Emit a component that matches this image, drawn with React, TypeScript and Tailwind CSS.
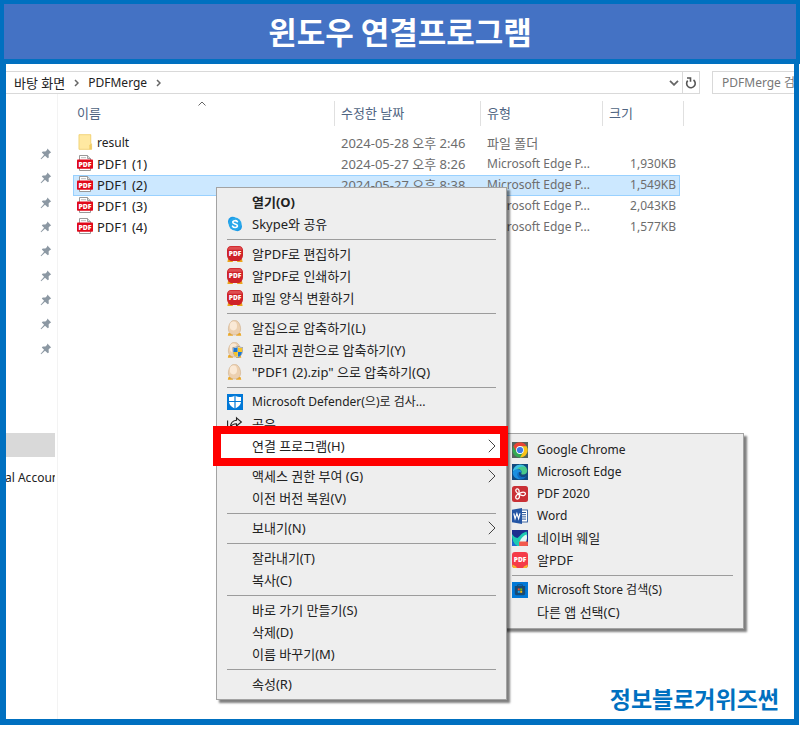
import type { ReactNode } from "react";

const FONT = "font-['Noto_Sans','Noto_Sans_CJK_KR',sans-serif]";
const KR_FONT = "font-['Noto_Sans_CJK_KR',sans-serif]";

function Svg({ children }: { children: ReactNode }) {
  return (
    <svg viewBox="0 0 16 16" className="block size-4" aria-hidden="true">
      {children}
    </svg>
  );
}

function IconLabel({ y, size = 6 }: { y: number; size?: number }) {
  return (
    <text x="8" y={y} fontSize={size} fontWeight="800" textAnchor="middle" fill="#fff" fontFamily="Open Sans, sans-serif">
      PDF
    </text>
  );
}

function PinIcon() {
  return (
    <svg viewBox="0 0 12 12" className="block size-3" aria-hidden="true">
      <path d="M7.4.6 11.2 4.4 10 5 8.6 6.6 8.8 9.4 7.8 10.2 5 7.7 1.2 11.2.6 10.8 4.1 6.8 1.8 4.4 2.8 3.4 5.4 3.5 7 2Z" fill="#8c98a3" />
    </svg>
  );
}

function FolderIcon() {
  return (
    <Svg>
      <path d="M1.8.5H14v11.2h1V15.5H1.8Z" fill="#ffe594" />
      <path d="M2.2.9h11.4v14.2H2.2Z" fill="#ffe9a2" />
      <path d="M14 9.5h.6v5.8h-2.2v-4Z" fill="#f2cc62" />
      <path d="M2 .7h11.8v9M2 .7v14.6h12.6V9.7" fill="none" stroke="#eccb6b" strokeWidth=".7" />
    </Svg>
  );
}

function PdfFileIcon() {
  return (
    <Svg>
      <path d="M2.5.5h8l3 3v12h-11Z" fill="#fff" stroke="#8d8d8d" strokeWidth=".9" />
      <path d="M10.5.5v3h3" fill="#ddd" stroke="#8d8d8d" strokeWidth=".8" />
      <path d="M4 2.7h5" stroke="#aaa" strokeWidth=".8" />
      <rect y="4.5" width="16" height="9.2" rx=".8" fill="#e1091a" />
      <IconLabel y={11.6} size={6.9} />
    </Svg>
  );
}

function SkypeIcon() {
  return (
    <Svg>
      <circle cx="5.6" cy="5.4" r="4.6" fill="#1c9be8" />
      <circle cx="10.4" cy="10.6" r="4.6" fill="#1c9be8" />
      <circle cx="8" cy="8" r="6.4" fill="#28a8ea" />
      <path d="M10.4 5.7C9.5 4.3 5.8 4.2 5.8 6.2c0 2.1 4.6 1.3 4.6 3.6 0 2.3-4 2.2-4.9.3" fill="none" stroke="#fff" strokeWidth="1.6" strokeLinecap="round" />
    </Svg>
  );
}

function AlPdfRedIcon() {
  return (
    <Svg>
      <path d="M1 13h4l1 3H.4ZM11 13h4l.6 3H10Z" fill="#eba51c" />
      <path d="M4 0h8c2.2 0 4 1.8 4 4v5c0 3-2 5.6-4 6H4C2 14.6 0 12 0 9V4c0-2.2 1.8-4 4-4Z" fill="#cf2228" />
      <path d="M4 .8h8c1.5 0 2.8 1 3 3H1c.2-2 1.5-3 3-3Z" fill="#de4e50" />
      <IconLabel y={10} size={6.6} />
    </Svg>
  );
}

function Egg() {
  return (
    <>
      <path d="M1.5 13h4l.5 2.8H.8ZM10 13h3.500l.8 2.800H9Z" fill="#eba828" />
      <path d="M7.500.2C4 .2 1.400 4.600 1.400 8.800c0 3.800 2.400 6.200 6.100 6.200s6.100-2.400 6.100-6.200C13.600 4.600 11 .2 7.500.2Z" fill="#ecd0b0" stroke="#c9a47c" strokeWidth=".5" />
      <ellipse cx="6.400" cy="6" rx="3.600" ry="4.400" fill="#fae9d6" />
    </>
  );
}

function EggIcon() {
  return (
    <Svg>
      <Egg />
    </Svg>
  );
}

function EggShieldIcon() {
  return (
    <Svg>
      <Egg />
      <path d="M10.8 4.200c1.600 1 3 1.300 4.900 1.300 0 5-1 8.300-4.900 10.200C6.900 13.800 5.800 10.500 5.800 5.500c1.900 0 3.400-.3 5-1.300Z" fill="#fff" stroke="#555" strokeWidth=".5" />
      <path d="M10.700 4.900v5H6.400V6.100c1.700 0 3-.4 4.300-1.200ZM10.800 9.900h4.200c-.5 2.600-1.800 4.100-4.200 5.200Z" fill="#1b77d2" />
      <path d="M10.800 4.900v5h4.300l.1-3.800c-1.800 0-3.100-.4-4.400-1.200ZM10.700 9.900v5.200c-2.400-1.100-3.700-2.600-4.200-5.200Z" fill="#f8c426" />
    </Svg>
  );
}

function DefenderIcon() {
  return (
    <Svg>
      <rect width="16" height="16" fill="#0078d7" />
      <path d="M8 1.500c1.600 1 3.700 1.500 6 1.500v4.300c0 3.500-2.600 6-6 7.300-3.400-1.300-6-3.800-6-7.300V3c2.300 0 4.400-.5 6-1.500Z" fill="#fff" />
      <path d="M8 1v14M1.500 7.500h13" stroke="#0078d7" strokeWidth="1.200" />
    </Svg>
  );
}

function ShareIcon() {
  return (
    <Svg>
      <path d="M.6 4.500v10h12v-3M9.500 1.800 14.400 6 9.500 10V7.700C6.500 7.700 4.600 8.700 3.400 11c.2-4 2.300-6.300 6.100-6.700Z" fill="none" stroke="#222" strokeWidth="1.100" />
    </Svg>
  );
}

function ChromeIcon() {
  return (
    <Svg>
      <rect width="16" height="16" fill="#56635e" />
      <circle cx="8" cy="8" r="7.600" fill="#34a853" />
      <path d="M1.400 4.200A7.600 7.600 0 0 1 14.600 4.200H8A3.800 3.800 0 0 0 4.700 9.900Z" fill="#ea4335" />
      <path d="M14.600 4.200A7.600 7.600 0 0 1 8 15.600L11.300 9.900A3.800 3.800 0 0 0 8 4.200Z" fill="#fbc116" />
      <circle cx="8" cy="8" r="3.900" fill="#fff" />
      <circle cx="8" cy="8" r="3.100" fill="#3b78e7" />
    </Svg>
  );
}

function EdgeIcon() {
  return (
    <Svg>
      <rect width="16" height="16" fill="#124a80" />
      <path d="M1 7.500C2 3.200 4.800.8 8.300.8c4 0 7 2.600 7 6 0 2.400-1.800 3.800-4 3.800-1.700 0-2.400-.7-1.900-1.600.8-1.700-.6-3.700-3-3.700Z" fill="#48c98a" />
      <path d="M.8 7.500C1.400 3.400 4.300.8 8 .7c2.500 0 4 .8 5.200 2.300-3-1-6.200-.8-8.200 2.300Z" fill="#3dbfe6" />
      <path d="M.7 8.400c.4-2.200 2.900-3.600 5.600-3.100C8.500 5.700 9.900 7.300 9.400 9 8 7.500 6.700 8 6.600 9.600c-.1 2.400 2.700 4.500 6 3.900-4.500 3.900-12 1-11.900-5.100Z" fill="#1b8fe0" />
      <path d="M6.600 7.800c-.8 2.900 1.700 5.700 4.700 5.500 1.400-.1 2.500-.6 3.300-1.200-1 2-3.200 3.200-5.200 3.100C6 14.800 3.700 10.400 6.600 7.800Z" fill="#0f6cc4" />
    </Svg>
  );
}

function Pdf2020Icon() {
  return (
    <Svg>
      <rect width="16" height="16" rx="2.500" fill="#c93036" />
      <g fill="none" stroke="#fff" strokeWidth="1.300">
        <path d="M6.700 8C4.500 6.700 3.200 4.800 4 3.500c.8-1.200 2.600-.8 3 .8C7.300 5.600 7.200 6.800 6.700 8Z" />
        <path d="M6.700 8c.8 1.600.8 3.900-.4 4.700-1.300.8-2.800-.1-2.600-1.600C3.800 9.600 5 8.500 6.700 8Z" />
        <path d="M6.700 8c1.500-1.200 4-2.100 5.500-1.700 1.700.5 1.600 2.600 0 3.100C10.600 9.800 8.300 9.200 6.700 8Z" />
      </g>
    </Svg>
  );
}

function WordIcon() {
  return (
    <Svg>
      <rect x="8" y="2" width="7.500" height="12" fill="#fff" stroke="#2b579a" strokeWidth=".9" />
      <path d="M10 4.500h4M10 6.700h4M10 8.900h4M10 11.100h4" stroke="#2b579a" strokeWidth="1" />
      <path d="M0 1.800 10 0v16L0 14.200Z" fill="#2455a4" />
      <path d="M1.800 5.300 3.100 10.600 4.900 5.600 6.600 10.600 8 5.300" fill="none" stroke="#fff" strokeWidth="1.200" />
    </Svg>
  );
}

function WhaleIcon() {
  return (
    <Svg>
      <rect width="16" height="16" fill="#1c2f8f" />
      <path d="M0 4c1.500 2.500 3 3.500 5.500 4C8 6.500 9 3 14.500 1.500 16 5 15 9 10 16H5C1.500 14 0 10 0 4Z" fill="#1dcbb2" />
      <path d="M0 9c1 3.500 2.500 5.500 5 7H0Z" fill="#1e6bd8" />
      <path d="M7.500 12c1.500-4 4-6.500 7-7.500 1 2.500.5 5-.5 7.500Z" fill="#e4f8f5" />
      <rect x="7" y="11.500" width="9" height="4.500" rx=".8" fill="#f2594d" />
    </Svg>
  );
}

function AlPdfIcon() {
  return (
    <Svg>
      <rect width="16" height="16" rx="3" fill="#f53b48" />
      <path d="M.5 12.500 4 14.500 5 16H2C1 16 0 15 .5 12.500ZM15.500 12.500 12 14.500 11 16h3c1 0 2-1 1.500-3.500Z" fill="#f7b52d" />
      <IconLabel y={9.7} size={6.6} />
    </Svg>
  );
}

function StoreIcon() {
  return (
    <Svg>
      <rect width="16" height="16" fill="#0078d7" />
      <path d="M5.600 4V2.800h4.800V4" fill="none" stroke="#14527f" strokeWidth="1" />
      <path d="M2.800 4h10.400v7.500c0 1-.7 1.700-1.700 1.700h-7c-1 0-1.700-.7-1.700-1.700Z" fill="#174a76" />
      <path d="M5.800 6.400h2v2h-2Z" fill="#f25022" />
      <path d="M8.200 6.400h2v2h-2Z" fill="#7fba00" />
      <path d="M5.800 8.800h2v2h-2Z" fill="#18a4ee" />
      <path d="M8.200 8.800h2v2h-2Z" fill="#fbba09" />
    </Svg>
  );
}

function Chevron({ className }: { className: string }) {
  return (
    <svg viewBox="0 0 8 14" className={className} fill="none" stroke="currentColor" aria-hidden="true">
      <path d="M.8.8 7 7 .8 13.200" />
    </svg>
  );
}

function CrumbArrow() {
  return (
    <svg viewBox="0 0 5 8" className="h-2 w-[5px] text-[#666]" fill="none" stroke="currentColor" strokeWidth="1.500" aria-hidden="true">
      <path d="M1 1 4 4 1 7" />
    </svg>
  );
}

type Entry = { label: string; icon?: ReactNode; sub?: boolean; bold?: boolean; marked?: boolean; latin?: boolean };

const mainMenu: Entry[][] = [
  [{ label: "열기(O)", bold: true }, { label: "Skype와 공유", icon: <SkypeIcon /> }],
  [
    { label: "알PDF로 편집하기", icon: <AlPdfRedIcon /> },
    { label: "알PDF로 인쇄하기", icon: <AlPdfRedIcon /> },
    { label: "파일 양식 변환하기", icon: <AlPdfRedIcon /> },
  ],
  [
    { label: "알집으로 압축하기(L)", icon: <EggIcon /> },
    { label: "관리자 권한으로 압축하기(Y)", icon: <EggShieldIcon /> },
    { label: '"PDF1 (2).zip" 으로 압축하기(Q)', icon: <EggIcon /> },
  ],
  [
    { label: "Microsoft Defender(으)로 검사...", icon: <DefenderIcon />, latin: true },
    { label: "공유", icon: <ShareIcon /> },
    { label: "연결 프로그램(H)", sub: true, marked: true },
  ],
  [{ label: "액세스 권한 부여 (G)", sub: true }, { label: "이전 버전 복원(V)" }],
  [{ label: "보내기(N)", sub: true }],
  [{ label: "잘라내기(T)" }, { label: "복사(C)" }],
  [{ label: "바로 가기 만들기(S)" }, { label: "삭제(D)" }, { label: "이름 바꾸기(M)" }],
  [{ label: "속성(R)" }],
];

const openWithMenu: Entry[][] = [
  [
    { label: "Google Chrome", icon: <ChromeIcon />, latin: true },
    { label: "Microsoft Edge", icon: <EdgeIcon />, latin: true },
    { label: "PDF 2020", icon: <Pdf2020Icon />, latin: true },
    { label: "Word", icon: <WordIcon />, latin: true },
    { label: "네이버 웨일", icon: <WhaleIcon /> },
    { label: "알PDF", icon: <AlPdfIcon /> },
  ],
  [{ label: "Microsoft Store 검색(S)", icon: <StoreIcon />, latin: true }, { label: "다른 앱 선택(C)" }],
];

function Menu({ groups, label, className }: { groups: Entry[][]; label: string; className: string }) {
  return (
    <div
      role="menu"
      aria-label={label}
      className={`absolute border border-[#a3a3a3] bg-[#eeeeee] text-[#222] shadow-[3px_3px_2px_rgba(0,0,0,0.5)] ${className}`}
    >
      {groups.map((group, g) => (
        <div key={g} role="group">
          {g > 0 && (
            <div role="separator" className="flex h-2 items-center px-[10px]">
              <div className="h-px flex-1 bg-[#9c9c9c]" />
            </div>
          )}
          {group.map((item) => (
            <div key={item.label} className="relative">
              {item.marked && <span className="absolute -inset-y-[9px] -right-[2px] -left-1 z-10 border-8 border-[#ff0000] bg-white" />}
              <button
                type="button"
                role="menuitem"
                className={`relative flex h-[22px] w-full items-center px-[10px] text-left leading-5 ${item.marked ? "z-20" : ""} ${item.latin ? "text-[12px]" : "text-[13px]"}`}
              >
                <span className="mr-[9px] size-4 shrink-0">{item.icon}</span>
                <span className={`flex-1 whitespace-nowrap ${item.bold ? "font-bold" : ""}`}>{item.label}</span>
                {item.sub && <Chevron className="h-[14px] w-2 text-[#444]" />}
              </button>
            </div>
          ))}
        </div>
      ))}
    </div>
  );
}

const files = [
  { name: "result", date: "2024-05-28 오후 2:46", type: "파일 폴더", size: "" },
  { name: "PDF1 (1)", date: "2024-05-27 오후 8:26", type: "Microsoft Edge P...", size: "1,930KB" },
  { name: "PDF1 (2)", date: "2024-05-27 오후 8:38", type: "Microsoft Edge P...", size: "1,549KB", selected: true },
  { name: "PDF1 (3)", date: "2024-05-27 오후 8:31", type: "Microsoft Edge P...", size: "2,043KB" },
  { name: "PDF1 (4)", date: "2024-05-27 오후 8:35", type: "Microsoft Edge P...", size: "1,577KB" },
];

function HeaderCell({ children, className }: { children?: ReactNode; className: string }) {
  return (
    <th scope="col" className={`relative h-8 p-0 text-left align-top font-normal ${className}`}>
      {children}
    </th>
  );
}

function FileTable() {
  return (
    <table className="w-full table-fixed border-separate border-spacing-0 text-[13px] leading-[18px]">
      <thead className="text-[#4f6482]">
        <tr>
          <HeaderCell className="">
            <div className="flex h-[25px] items-center pb-[2px] pl-1">이름</div>
            <svg viewBox="0 0 8 5" className="absolute top-0 left-1/2 -ml-[6px] h-[5px] w-2" fill="none" stroke="#666" aria-hidden="true">
              <path d="M.5 4.500 4 1 7.500 4.500" />
            </svg>
          </HeaderCell>
          <HeaderCell className="w-[146px]">
            <div className="flex h-[25px] items-center border-l border-[#e0e0e0] pb-[2px] pl-[6px]">수정한 날짜</div>
          </HeaderCell>
          <HeaderCell className="w-[122px]">
            <div className="flex h-[25px] items-center border-l border-[#e0e0e0] pb-[2px] pl-[6px]">유형</div>
          </HeaderCell>
          <HeaderCell className="w-[78px]">
            <div className="flex h-[25px] items-center border-l border-[#e0e0e0] pb-[2px] pl-[6px]">크기</div>
          </HeaderCell>
          <td className="w-1 p-0 align-top">
            <div className="h-[25px] border-r border-[#e0e0e0]" />
          </td>
        </tr>
      </thead>
      <tbody className="text-[#6d6d6d]">
        {files.map((f) => {
          const cell = f.selected ? "border-y border-[#99d1ff] bg-[#cce8ff]" : "border-y border-transparent";
          return (
            <tr key={f.name} className="h-[21px]">
              <td className={`border-l p-0 ${cell}`}>
                <div className="flex h-[19px] gap-1 pl-[3px] text-[#222]">
                  {f.size ? <PdfFileIcon /> : <FolderIcon />}
                  <span className={f.size ? "" : "text-[12px]"}>{f.name}</span>
                </div>
              </td>
              <td className={`p-0 pl-[7px] ${cell}`}>
                <div className="h-[19px] whitespace-nowrap">{f.date}</div>
              </td>
              <td className={`p-0 pl-[7px] ${cell}`}>
                <div className={`h-[19px] whitespace-nowrap ${f.size ? "text-[12px]" : ""}`}>{f.type}</div>
              </td>
              <td className={`border-r p-0 pr-[3px] text-right text-[12px] ${cell}`}>
                <div className="h-[19px]">{f.size}</div>
              </td>
            </tr>
          );
        })}
      </tbody>
    </table>
  );
}

export default function App() {
  return (
    <div className={`bg-white ${FONT}`}>
      <header className="border-4 border-b-[5px] border-[#0070c0] bg-[#4472c4]">
        <h1 className={`flex h-[55px] items-center justify-center text-[31px] font-bold text-white ${KR_FONT}`}>윈도우 연결프로그램</h1>
      </header>
      <main className="relative mr-px flex min-h-[661px] flex-col border-r-[5px] border-b-[6px] border-l-[6px] border-[#0070c0]">
        <div className="mt-[7px] flex h-[23px] text-[13px] leading-5 text-[#222]">
          <nav aria-label="경로" className="flex flex-1 items-center gap-[9px] border-y border-[#d9d9d9] pl-2">
            <button type="button">바탕 화면</button>
            <CrumbArrow />
            <button type="button" className="text-[12px]">PDFMerge</button>
            <CrumbArrow />
          </nav>
          <button type="button" aria-label="이전 위치" className="flex w-4 items-center justify-center border-y border-[#d9d9d9]">
            <svg viewBox="0 0 10 6" className="h-[6px] w-[10px]" fill="none" stroke="#666" strokeWidth="1.800" aria-hidden="true">
              <path d="M1 .8 5 4.800 9 .8" />
            </svg>
          </button>
          <button type="button" aria-label="새로 고침" className="mr-3 flex w-[18px] items-center justify-center border border-[#d9d9d9]">
            <svg viewBox="0 0 12 12" className="size-3" fill="none" stroke="#555" strokeWidth="1.600" aria-hidden="true">
              <path d="M2.700 3.600A4.300 4.300 0 1 0 8.500 3M2 1h3.500v3.800" />
            </svg>
          </button>
          <div className="w-[82px] overflow-hidden border-y border-l border-[#d9d9d9]">
            <input
              type="text"
              aria-label="검색"
              placeholder="PDFMerge 검색"
              className="block h-[21px] w-[140px] pl-[9px] text-[12px] outline-none placeholder:text-[#777]"
            />
          </div>
        </div>
        <div className="flex flex-1">
          <aside className="w-[52px] shrink-0 border-r border-[#f3f3f3] pt-12 pr-[2px]">
            <ul className="grid h-[219px] grid-rows-9">
              {Array.from({ length: 9 }, (_, i) => (
                <li key={i} className="flex items-center justify-end pr-[3px]">
                  <PinIcon />
                </li>
              ))}
            </ul>
            <div className="mt-[72px] h-6 bg-[#d9d9d9]" />
            <div className="mt-[11px] overflow-hidden text-[12px] leading-5 whitespace-nowrap text-[#222]">
              <span className="-ml-px">al Account</span>
            </div>
          </aside>
          <div className="flex flex-1 flex-col">
            <section aria-label="파일 목록" className="flex-1 pt-[7px] pr-[110px] pl-[15px]">
              <FileTable />
            </section>
            <footer className={`pr-[15px] pb-px text-right text-[23px] leading-10 font-bold text-[#0070c0] ${KR_FONT}`}>정보블로거위즈썬</footer>
          </div>
        </div>
        <Menu groups={mainMenu} label="파일 메뉴" className="top-[123px] left-[210px] z-20 w-[291px] pt-[3px] pb-1" />
        <Menu groups={openWithMenu} label="연결 프로그램" className="top-[369px] left-[495px] z-10 w-[243px] py-[5px]" />
      </main>
    </div>
  );
}
